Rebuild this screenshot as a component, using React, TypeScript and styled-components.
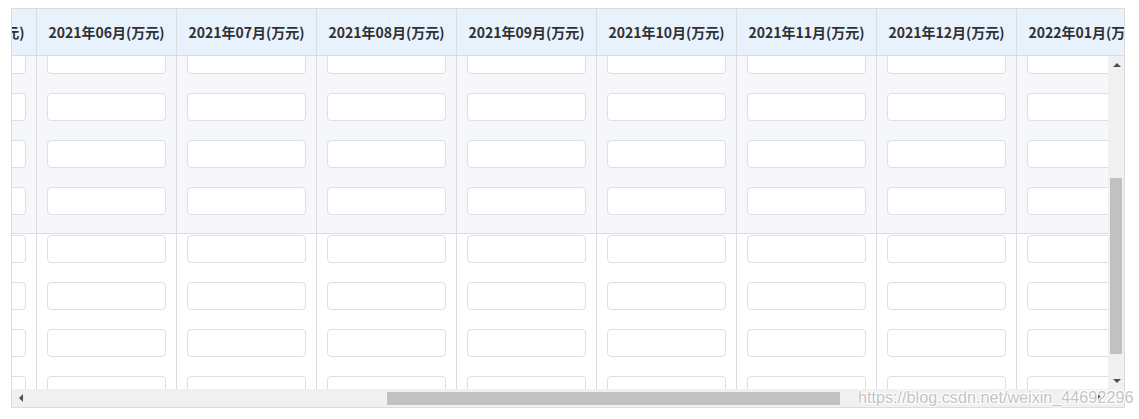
import React, { useLayoutEffect, useRef } from "react";
import styled, { createGlobalStyle } from "styled-components";

const COL = 140;
const LEAD = 192;
const BODY_W = 1096;
const BODY_H = 333;
const ROW_H = 189;
const BAR = 17;
const SCROLL_LEFT = 867;
const SCROLL_TOP = 200;

const months = Array.from({ length: 17 }, (_, i) => {
  const y = 2021 + Math.floor(i / 12);
  const m = String((i % 12) + 1).padStart(2, "0");
  return `${y}年${m}月(万元)`;
});

const rows = [
  { name: "营业收入", hover: false },
  { name: "营业成本", hover: true },
  { name: "利润总额", hover: false },
];

const GlobalStyle = createGlobalStyle`
  body {
    margin: 0;
    background: #fff;
    font-family: "Noto Sans CJK SC", "Noto Sans", sans-serif;
  }
`;

const Frame = styled.div`
  position: relative;
  margin: 8px 14px 0 11px;
  border: 1px solid #dcdcdc;
  height: 398px;
  display: flex;
  flex-direction: column;
`;

const HeaderViewport = styled.div`
  overflow: hidden;
  flex-shrink: 0;
  background: #e8f2fd;
  border-bottom: 1px solid #dcdcdc;
`;

const HeaderRow = styled.div`
  display: flex;
  width: max-content;
`;

const HeadCell = styled.div<{ $w: number }>`
  box-sizing: border-box;
  width: ${(p) => p.$w}px;
  height: 46px;
  flex-shrink: 0;
  border-right: 1px solid #dcdcdc;
  display: flex;
  align-items: center;
  justify-content: center;
  font-size: 14px;
  font-weight: 700;
  color: #2f3033;
  white-space: nowrap;
`;

const Gutter = styled.div`
  width: 16px;
  flex-shrink: 0;
`;

const BodyArea = styled.div`
  display: flex;
  height: ${BODY_H}px;
  flex-shrink: 0;
`;

const BodyViewport = styled.div`
  width: ${BODY_W}px;
  overflow: hidden;
`;

const Row = styled.div<{ $hover: boolean }>`
  display: flex;
  width: max-content;
  border-bottom: 1px solid #dcdcdc;
  background: ${(p) => (p.$hover ? "#f5f7fa" : "#fff")};
`;

const Cell = styled.div<{ $w: number }>`
  box-sizing: border-box;
  width: ${(p) => p.$w}px;
  flex-shrink: 0;
  border-right: 1px solid #dcdcdc;
  padding: 1px 10px 18px;
  display: flex;
  flex-direction: column;
  gap: 19px;
`;

const LabelCell = styled(Cell)`
  justify-content: center;
  align-items: center;
  font-size: 14px;
  color: #606266;
`;

const Input = styled.input`
  box-sizing: border-box;
  width: 100%;
  height: 28px;
  margin: 0;
  border: 1px solid #dcdfe6;
  border-radius: 4px;
  background: #fff;
  outline: none;
  padding: 0 8px;
  font: inherit;
  font-size: 13px;
`;

const VBar = styled.div`
  width: 16px;
  background: #f0f0f0;
  display: flex;
  flex-direction: column;
`;

const HBarRow = styled.div`
  display: flex;
  height: 18px;
  flex-shrink: 0;
  background: #f0f0f0;
`;

const HBar = styled.div`
  width: ${BODY_W}px;
  display: flex;
`;

const ArrowButton = styled.div<{ $dir: "up" | "down" | "left" | "right" }>`
  width: ${BAR}px;
  height: ${BAR}px;
  flex-shrink: 0;
  display: flex;
  align-items: center;
  justify-content: center;
  &::before {
    content: "";
    width: 0;
    height: 0;
    ${(p) =>
      p.$dir === "up"
        ? "border-left: 4px solid transparent; border-right: 4px solid transparent; border-bottom: 4px solid #505050;"
        : p.$dir === "down"
        ? "border-left: 4px solid transparent; border-right: 4px solid transparent; border-top: 4px solid #505050;"
        : p.$dir === "left"
        ? "border-top: 4px solid transparent; border-bottom: 4px solid transparent; border-right: 4px solid #505050;"
        : "border-top: 4px solid transparent; border-bottom: 4px solid transparent; border-left: 4px solid #505050;"}
  }
`;

const VTrack = styled.div`
  flex: 1;
  display: flex;
  flex-direction: column;
  align-items: center;
`;

const HTrack = styled.div`
  flex: 1;
  display: flex;
  align-items: center;
`;

const VThumb = styled.div`
  width: 12px;
  background: #c1c1c1;
`;

const HThumb = styled.div`
  height: 13px;
  background: #c1c1c1;
`;

const Corner = styled.div`
  flex: 1;
  background: #f0f0f0;
`;

const Watermark = styled.div`
  position: absolute;
  left: 846px;
  top: 379px;
  font-family: "Liberation Sans", Arial, sans-serif;
  font-size: 16.2px;
  line-height: 19px;
  color: #c4c4c4;
  white-space: nowrap;
  text-shadow: 1px 1px 0 #fff, -1px -1px 0 #fff, 1px -1px 0 #fff, -1px 1px 0 #fff;
  pointer-events: none;
`;

function thumb(view: number, total: number, pos: number, track: number) {
  const size = Math.round((track * view) / total);
  const offset = Math.round((pos / (total - view)) * (track - size));
  return { size, offset };
}

export default function App() {
  const headRef = useRef<HTMLDivElement>(null);
  const bodyRef = useRef<HTMLDivElement>(null);

  const totalW = LEAD + months.length * COL;
  const totalH = rows.length * ROW_H;
  const h = thumb(BODY_W, totalW, SCROLL_LEFT, BODY_W - BAR * 2);
  const v = thumb(BODY_H, totalH, SCROLL_TOP, BODY_H - BAR * 2);

  useLayoutEffect(() => {
    if (headRef.current) headRef.current.scrollLeft = SCROLL_LEFT;
    if (bodyRef.current) {
      bodyRef.current.scrollLeft = SCROLL_LEFT;
      bodyRef.current.scrollTop = SCROLL_TOP;
    }
  }, []);

  return (
    <>
      <GlobalStyle />
      <Frame>
        <HeaderViewport ref={headRef}>
          <HeaderRow>
            <HeadCell $w={LEAD}>项目</HeadCell>
            {months.map((m) => (
              <HeadCell key={m} $w={COL}>
                {m}
              </HeadCell>
            ))}
            <Gutter />
          </HeaderRow>
        </HeaderViewport>

        <BodyArea>
          <BodyViewport ref={bodyRef}>
            {rows.map((r) => (
              <Row key={r.name} $hover={r.hover}>
                <LabelCell $w={LEAD}>{r.name}</LabelCell>
                {months.map((m) => (
                  <Cell key={m} $w={COL}>
                    {[0, 1, 2, 3].map((i) => (
                      <Input key={i} />
                    ))}
                  </Cell>
                ))}
              </Row>
            ))}
          </BodyViewport>
          <VBar>
            <ArrowButton $dir="up" />
            <VTrack>
              <VThumb style={{ marginTop: v.offset, height: v.size }} />
            </VTrack>
            <ArrowButton $dir="down" />
          </VBar>
        </BodyArea>

        <HBarRow>
          <HBar>
            <ArrowButton $dir="left" />
            <HTrack>
              <HThumb style={{ marginLeft: h.offset, width: h.size }} />
            </HTrack>
            <ArrowButton $dir="right" />
          </HBar>
          <Corner />
        </HBarRow>

        <Watermark>https://blog.csdn.net/weixin_44692296</Watermark>
      </Frame>
    </>
  );
}
